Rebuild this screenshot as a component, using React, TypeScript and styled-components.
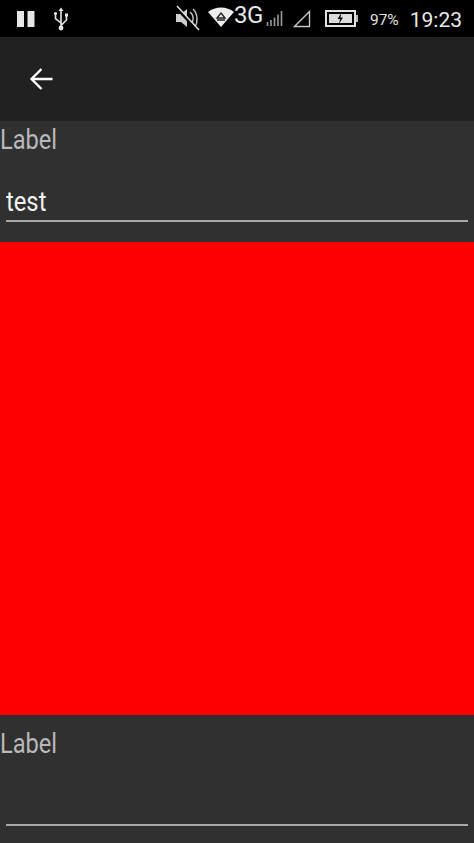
import React from "react";
import styled, { createGlobalStyle } from "styled-components";

const Global = createGlobalStyle`
  html, body { margin: 0; padding: 0; background: #303030; }
  #root { width: 474px; height: 843px; overflow: hidden; }
`;

const Screen = styled.div`
  width: 474px;
  height: 843px;
  display: flex;
  flex-direction: column;
  font-family: Roboto, "Liberation Sans", sans-serif;
`;

const StatusBar = styled.div`
  height: 37px;
  flex: none;
  background: #000;
  display: flex;
  align-items: center;
  color: #e6e6e6;
`;

const StatusLeft = styled.div`
  display: flex;
  align-items: center;
  gap: 17px;
  padding-left: 17px;
`;

const StatusRight = styled.div`
  margin-left: auto;
  display: flex;
  align-items: center;
  padding-right: 12px;
`;

const NetworkText = styled.span`
  font-size: 24px;
  line-height: 30px;
  letter-spacing: -0.4px;
  margin: -8px 0 0 0;
  color: #e8e8e8;
`;

const Percent = styled.span`
  font-size: 15.5px;
  margin: 3px 0 0 12px;
  color: #e0e0e0;
`;

const Clock = styled.span`
  font-size: 21px;
  margin: 2px 0 0 11px;
  color: #e8e8e8;
`;

const Glyph = styled.svg<{ $ml?: number; $mt?: number }>`
  display: block;
  flex: none;
  margin-left: ${(p) => p.$ml ?? 0}px;
  margin-top: ${(p) => p.$mt ?? 0}px;
`;

const Toolbar = styled.div`
  height: 84px;
  flex: none;
  background: #212121;
  display: flex;
  align-items: center;
  padding-left: 29px;
`;

const BackButton = styled.button`
  border: 0;
  padding: 0;
  background: none;
  display: block;
  height: 24px;
`;

const Field = styled.div<{ $height: number; $top: number }>`
  height: ${(p) => p.$height}px;
  padding-top: ${(p) => p.$top}px;
  flex: none;
  background: #303030;
  box-sizing: border-box;
  display: flex;
  flex-direction: column;
`;

const Label = styled.label`
  font-size: 27px;
  line-height: 30px;
  color: #b9b9b9;
  margin-left: 0;
  transform: scaleX(0.875);
  transform-origin: left center;
  white-space: nowrap;
`;

const InputRow = styled.div<{ $gap: number }>`
  margin: ${(p) => p.$gap}px 6px 0 6px;
  height: 37px;
  border-bottom: 2px solid #a8a8a8;
  display: flex;
  align-items: center;
`;

const Value = styled.span`
  font-size: 27px;
  line-height: 30px;
  color: #f2f2f2;
  transform: scaleX(0.88);
  transform-origin: left center;
`;

const RedPanel = styled.div`
  height: 473px;
  flex: none;
  background: #ff0000;
`;

export default function App() {
  return (
    <Screen>
      <Global />
      <StatusBar>
        <StatusLeft>
          <Glyph width="18" height="18" viewBox="0 0 18 18">
            <rect x="0" y="1" width="7" height="16" fill="#e6e6e6" />
            <rect x="10.5" y="1" width="7" height="16" fill="#e6e6e6" />
          </Glyph>
          <Glyph width="18" height="24" viewBox="0 0 18 24">
            <path d="M9 21V3M9 16L3.5 11.5V7.5M9 18.5L14.5 13V9" fill="none" stroke="#e6e6e6" strokeWidth="1.6" />
            <path d="M9 0.5L11.5 4H6.5Z" fill="#e6e6e6" />
            <circle cx="9" cy="21" r="2.4" fill="#e6e6e6" />
            <circle cx="3.5" cy="6.5" r="1.6" fill="#e6e6e6" />
            <rect x="13" y="6.5" width="3" height="3" fill="#e6e6e6" />
          </Glyph>
        </StatusLeft>
        <StatusRight>
          <Glyph width="26" height="26" viewBox="0 0 26 26" $mt={-1}>
            <path d="M2 9H7L13 4V22L7 17H2Z" fill="#cfcfcf" />
            <path d="M16 7C20 10 20 16 17 20M19 4C24 9 24 17 21 22" fill="none" stroke="#bdbdbd" strokeWidth="1.5" />
            <path d="M2 2L24 26" stroke="#000" strokeWidth="3.2" />
            <path d="M3 1L25 25" stroke="#e2e2e2" strokeWidth="1.5" />
          </Glyph>
          <Glyph width="26" height="20" viewBox="0 0 26 20" $ml={8} $mt={-4}>
            <path d="M0 5C7 -1 19 -1 26 5L13 20Z" fill="#ededed" />
            <path d="M13 6L17 11H9Z M9 13H17" fill="none" stroke="#222" strokeWidth="1.4" />
          </Glyph>
          <NetworkText>3G</NetworkText>
          <Glyph width="18" height="17" viewBox="0 0 18 17" $ml={3}>
            <path d="M1.5 12V16M5 10V16M8.5 7.5V16M12 4.5V16M15.5 1V16" stroke="#9a9a9a" strokeWidth="1.6" />
          </Glyph>
          <Glyph width="18" height="18" viewBox="0 0 18 18" $ml={9}>
            <path d="M1.5 16.5H16.5V1.5Z" fill="none" stroke="#c8c8c8" strokeWidth="1.4" />
          </Glyph>
          <Glyph width="33" height="17" viewBox="0 0 33 17" $ml={14}>
            <rect x="1" y="1" width="29" height="15" fill="#000" stroke="#e2e2e2" strokeWidth="2" />
            <rect x="4" y="4" width="23" height="9" fill="#dcdcdc" />
            <rect x="31" y="5" width="2" height="7" fill="#b8b8b8" />
            <path d="M16.5 2.5L12.5 9H15L14 14L18 7.5H15.5Z" fill="#111" />
          </Glyph>
          <Percent>97%</Percent>
          <Clock>19:23</Clock>
        </StatusRight>
      </StatusBar>
      <Toolbar>
        <BackButton aria-label="Back">
          <Glyph width="24" height="24" viewBox="0 0 24 24">
            <path d="M23.5 12H2.5M12.5 2L2.5 12L12.5 22" fill="none" stroke="#fff" strokeWidth="2.4" />
          </Glyph>
        </BackButton>
      </Toolbar>
      <Field $height={121} $top={4}>
        <Label>Label</Label>
        <InputRow $gap={28}>
          <Value>test</Value>
        </InputRow>
      </Field>
      <RedPanel />
      <Field $height={128} $top={14}>
        <Label>Label</Label>
        <InputRow $gap={28}>
          <Value />
        </InputRow>
      </Field>
    </Screen>
  );
}
